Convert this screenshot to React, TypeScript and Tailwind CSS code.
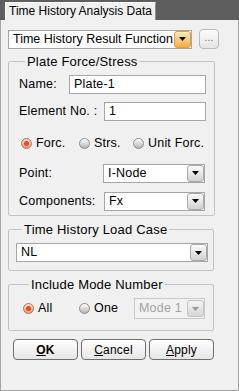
import React from 'react';

type SelectProps = {
  value: string;
  className?: string;
  orange?: boolean;
  disabled?: boolean;
};

function Arrow({ disabled }: { disabled?: boolean }) {
  return (
    <svg width="7" height="4" viewBox="0 0 7 4">
      <path d="M0 0H7L3.5 4Z" fill={disabled ? '#9a9a9a' : '#000'} />
    </svg>
  );
}

function Select({ value, className = '', orange = false, disabled = false }: SelectProps) {
  const btn = orange
    ? 'bg-gradient-to-b from-[#ffe9b4] to-[#f6ad3e] border-[#d9a04a]'
    : disabled
    ? 'bg-gradient-to-b from-[#f4f4f4] to-[#d6d6d6] border-[#c4c4c4]'
    : 'bg-gradient-to-b from-[#fbfbfb] to-[#d2d2d2] border-[#a9a9a9]';
  return (
    <div
      className={`h-[19px] flex items-center border ${
        disabled ? 'border-[#c9c9c9] bg-[#f2f2f2] text-[#a3a3a3]' : 'border-[#a6a6a6] bg-white'
      } ${className}`}
    >
      <span className="flex-1 pl-[4px] leading-[17px] whitespace-nowrap overflow-hidden">{value}</span>
      <div className={`h-[17px] w-[17px] shrink-0 rounded-[3px] border flex items-center justify-center ${btn}`}>
        <Arrow disabled={disabled} />
      </div>
    </div>
  );
}

function Radio({ label, checked = false, className = '' }: { label: string; checked?: boolean; className?: string }) {
  return (
    <div className={`flex items-center gap-[4px] ${className}`}>
      <div
        className={`w-[11px] h-[11px] rounded-full border flex items-center justify-center ${
          checked
            ? 'border-[#c46a50] bg-gradient-to-b from-[#fbe3d8] to-[#e99a80]'
            : 'border-[#8d8d8d] bg-gradient-to-b from-[#ffffff] to-[#b5b5b5]'
        }`}
      >
        {checked && <div className="w-[5px] h-[5px] rounded-full bg-[#ef4a12]" />}
      </div>
      <span>{label}</span>
    </div>
  );
}

function Group({ title, className = '', children }: { title: string; className?: string; children: React.ReactNode }) {
  return (
    <fieldset className={`border border-[#c3c3c3] rounded-[2px] w-[206px] ${className}`}>
      <legend className="ml-[6px] px-[2px] text-[13px] leading-[15px] tracking-[0.2px]">{title}</legend>
      {children}
    </fieldset>
  );
}

function Input({ value, className = '' }: { value: string; className?: string }) {
  return (
    <div className={`h-[19px] border border-[#a6a6a6] bg-white pl-[4px] leading-[17px] ${className}`}>{value}</div>
  );
}

function Button({ children }: { children: React.ReactNode }) {
  return (
    <div className="w-[65px] h-[21px] rounded-[4px] border border-[#6f6f6f] bg-gradient-to-b from-[#ffffff] to-[#e6e6e6] flex items-center justify-center text-[12px]">
      {children}
    </div>
  );
}

export default function App() {
  return (
    <div className="w-[239px] h-[391px] bg-[#5e5e5e] flex flex-col font-['Liberation_Sans',Arial,sans-serif] text-[12.5px] tracking-[0.2px] text-black">
      <div className="h-[20px] shrink-0 flex items-end pl-[5px]">
        <div className="h-[18px] bg-[#efefef] border-t border-l border-white border-r border-r-[#8e8e8e] pl-[3px] pr-[3px] leading-[17px] text-[12px] tracking-normal whitespace-nowrap">
          Time History Analysis Data
        </div>
      </div>
      <div className="flex-1 bg-[#f0f0f0] border-l border-r border-b border-[#a3a3a3] pl-[7px] pt-[9px] flex flex-col">
        <div className="flex items-center gap-[7px]">
          <Select value="Time History Result Function" orange className="w-[184px] text-[12.5px] tracking-normal" />
          <div className="w-[20px] h-[20px] rounded-[4px] border border-[#b9b9b9] bg-gradient-to-b from-[#fdfdfd] to-[#e4e4e4] flex items-center justify-center text-[#3f5fa8] text-[10px] leading-none pb-[3px]">
            ...
          </div>
        </div>

        <Group title="Plate Force/Stress" className="mt-[5px] h-[162px] pl-[10px] pr-[8px]">
          <div className="flex items-center mt-[6px]">
            <span className="w-[50px]">Name:</span>
            <Input value="Plate-1" className="w-[137px]" />
          </div>
          <div className="flex items-center mt-[8px]">
            <span className="w-[85px]">Element No. :</span>
            <Input value="1" className="w-[102px]" />
          </div>
          <div className="flex items-center mt-[13px] pl-[2px]">
            <Radio label="Forc." checked className="w-[58px]" />
            <Radio label="Strs." className="w-[54px]" />
            <Radio label="Unit Forc." />
          </div>
          <div className="flex items-center mt-[11px]">
            <span className="w-[84px]">Point:</span>
            <Select value="I-Node" className="w-[102px]" />
          </div>
          <div className="flex items-center mt-[9px]">
            <span className="w-[85px]">Components:</span>
            <Select value="Fx" className="w-[101px]" />
          </div>
        </Group>

        <Group title="Time History Load Case" className="mt-[6px] h-[49px] pl-[7px] pr-[5px]">
          <Select value="NL" className="mt-[6px] w-[192px]" />
        </Group>

        <Group title="Include Mode Number" className="mt-[6px] h-[54px] pl-[14px]">
          <div className="flex items-center mt-[6px]">
            <Radio label="All" checked className="w-[56px]" />
            <Radio label="One" className="w-[55px]" />
            <Select value="Mode 1" disabled className="w-[71px] h-[21px]" />
          </div>
        </Group>

        <div className="flex gap-[3px] mt-[8px] pl-[5px]">
          <Button>
            <span className="font-bold"><span className="underline">O</span>K</span>
          </Button>
          <Button>
            <span><span className="underline">C</span>ancel</span>
          </Button>
          <Button>
            <span><span className="underline">A</span>pply</span>
          </Button>
        </div>
      </div>
    </div>
  );
}
